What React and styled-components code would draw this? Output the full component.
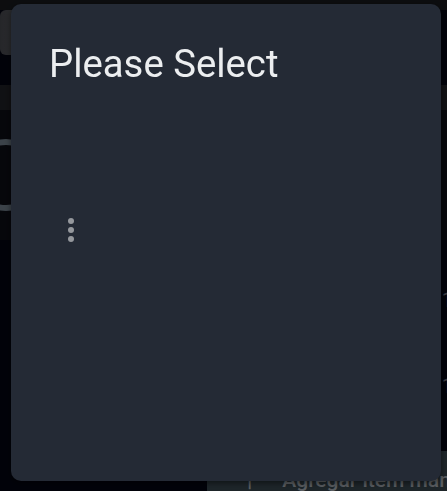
import React from "react";
import styled, { createGlobalStyle } from "styled-components";

const GlobalStyle = createGlobalStyle`
  html, body {
    margin: 0;
    padding: 0;
    background: #03040f;
    font-family: Roboto, "Noto Sans", sans-serif;
  }
  #root {
    height: 491px;
  }
`;

const rows = [
  { id: 1, qty: "1" },
  { id: 2, qty: "1" },
];

const App = () => {
  return (
    <>
      <GlobalStyle />
      <Page>
        <TopStrip />
        <Header>
          <Thumb />
        </Header>
        <Band />
        <Band $tall>
          <Ring />
        </Band>
        <List>
          {rows.map((row) => (
            <Row key={row.id}>
              <Qty>{row.qty}</Qty>
            </Row>
          ))}
        </List>
        <Footer>
          <FooterBar>
            <Plus>|</Plus>
            <FooterText>Agregar item manual</FooterText>
          </FooterBar>
        </Footer>
      </Page>
      <Backdrop>
        <Dialog>
          <Title>Please Select</Title>
          <Body>
            <Dots>
              <Dot />
              <Dot />
              <Dot />
            </Dots>
          </Body>
        </Dialog>
      </Backdrop>
    </>
  );
};

const Page = styled.div`
  display: flex;
  flex-direction: column;
  height: 491px;
  background: #03040f;
  overflow: hidden;
`;

const TopStrip = styled.div`
  height: 10px;
  background: #141518;
`;

const Header = styled.div`
  height: 45px;
  display: flex;
  align-items: stretch;
  padding-bottom: 30px;
  background: #03040f;
`;

const Thumb = styled.div`
  width: 60px;
  border-radius: 6px 0 0 6px;
  background: linear-gradient(90deg, #3a3b40, #5a5c60);
`;

const Band = styled.div`
  height: ${({ $tall }) => ($tall ? "130px" : "25px")};
  background: ${({ $tall }) => ($tall ? "#0a0b12" : "#1a1b1f")};
  display: flex;
  align-items: center;
`;

const Ring = styled.div`
  width: 60px;
  height: 60px;
  margin-left: -30px;
  border-radius: 50%;
  border: 6px solid #5b6670;
`;

const List = styled.div`
  flex: 1;
  display: flex;
  flex-direction: column;
  gap: 62px;
  padding-top: 48px;
`;

const Row = styled.div`
  display: flex;
  justify-content: flex-end;
  height: 24px;
`;

const Qty = styled.span`
  color: #5d5f66;
  font-size: 20px;
  margin-right: -6px;
`;

const Footer = styled.div`
  display: flex;
  justify-content: flex-end;
`;

const FooterBar = styled.div`
  width: 240px;
  height: 40px;
  background: #2e3a40;
  display: flex;
  align-items: center;
  gap: 30px;
  padding-left: 40px;
  padding-top: 18px;
  box-sizing: border-box;
  color: #8a9096;
  font-size: 21px;
  font-weight: 500;
  white-space: nowrap;
  overflow: hidden;
`;

const Plus = styled.span`
  font-weight: 700;
`;

const FooterText = styled.span``;

const Backdrop = styled.div`
  position: fixed;
  inset: 0;
  background: rgba(0, 0, 0, 0.35);
`;

const Dialog = styled.div`
  position: absolute;
  left: 11px;
  top: 4px;
  width: 430px;
  height: 477px;
  box-sizing: border-box;
  padding: 41px 38px;
  border-radius: 10px;
  background: #242a35;
  box-shadow: 0 2px 6px rgba(0, 0, 0, 0.5);
  display: flex;
  flex-direction: column;
`;

const Title = styled.h2`
  margin: 0;
  font-size: 38.3px;
  font-weight: 400;
  line-height: 1;
  color: #eceef0;
`;

const Body = styled.div`
  padding: 135px 0 0 19px;
`;

const Dots = styled.div`
  display: flex;
  flex-direction: column;
  gap: 3px;
`;

const Dot = styled.span`
  width: 6px;
  height: 6px;
  border-radius: 50%;
  background: #95989d;
`;

export default App;
